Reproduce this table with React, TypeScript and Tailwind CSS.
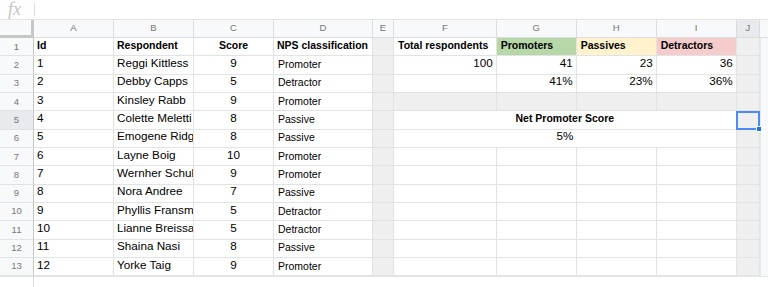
import React from "react";

const COLS = ["A", "B", "C", "D", "E", "F", "G", "H", "I", "J"];

const people: [number, string, number, string][] = [
  [1, "Reggi Kittless", 9, "Promoter"],
  [2, "Debby Capps", 5, "Detractor"],
  [3, "Kinsley Rabb", 9, "Promoter"],
  [4, "Colette Meletti", 8, "Passive"],
  [5, "Emogene Ridgeway", 8, "Passive"],
  [6, "Layne Boig", 10, "Promoter"],
  [7, "Wernher Schulke", 9, "Promoter"],
  [8, "Nora Andree", 7, "Passive"],
  [9, "Phyllis Fransman", 5, "Detractor"],
  [10, "Lianne Breissan", 5, "Detractor"],
  [11, "Shaina Nasi", 8, "Passive"],
  [12, "Yorke Taig", 9, "Promoter"],
];

const cell =
  "border-r border-b border-[#e2e3e3] overflow-hidden whitespace-nowrap h-[18.33px] text-black";
const grayCell = "border-r border-b border-[#e2e3e3] bg-[#efefef] h-[18.33px]";
const bold = "font-bold text-[10.5px] flex items-end pb-[2px]";
const plain = "text-[11.7px] flex items-end pb-[2px] text-[#222]";

function RowHead({ n, active }: { n: number; active?: boolean }) {
  return (
    <div
      className={`h-[18.33px] border-r border-b border-r-[#c4c7c5] border-b-[#e2e3e3] flex items-center justify-center text-[9.5px] text-[#777] ${
        active ? "bg-[#e8eaed]" : "bg-[#f8f9fa]"
      }`}
    >
      {n}
    </div>
  );
}

function Scroll() {
  return <div className="h-[18.33px] bg-[#f8f9fa] border-l border-[#e8e8e8]" />;
}

function RightBlock({ r }: { r: number }) {
  // columns F..I for sheet row r
  if (r === 1) {
    return (
      <>
        <div className={`${cell} ${bold} pl-[4px]`}>Total respondents</div>
        <div className={`${cell} bg-[#b6d7a8] ${bold} pl-[4px]`}>Promoters</div>
        <div className={`${cell} bg-[#fff2cc] ${bold} pl-[4px]`}>Passives</div>
        <div className={`${cell} bg-[#f4cccc] ${bold} pl-[4px]`}>Detractors</div>
      </>
    );
  }
  if (r === 2 || r === 3) {
    const vals = r === 2 ? ["100", "41", "23", "36"] : ["", "41%", "23%", "36%"];
    return (
      <>
        {vals.map((v, i) => (
          <div key={i} className={`${cell} ${plain} justify-end pr-[3px]`}>
            {v}
          </div>
        ))}
      </>
    );
  }
  if (r === 4) {
    return (
      <>
        <div className={grayCell} />
        <div className={grayCell} />
        <div className={grayCell} />
        <div className={grayCell} />
      </>
    );
  }
  if (r === 5) {
    return <div className={`${cell} col-span-4 ${bold} justify-center`}>Net Promoter Score</div>;
  }
  if (r === 6) {
    return <div className={`${cell} col-span-4 ${plain} justify-center`}>5%</div>;
  }
  return (
    <>
      <div className={cell} />
      <div className={cell} />
      <div className={cell} />
      <div className={cell} />
    </>
  );
}

export default function App() {
  return (
    <div
      className="w-[768px] h-[287px] bg-white overflow-hidden relative"
      style={{ fontFamily: '"Liberation Sans", Arial, sans-serif' }}
    >
      {/* formula bar */}
      <div className="h-[20px] flex items-center border-b border-[#e2e3e3]">
        <div className="w-[34px] flex items-center pl-[8px]">
          <span
            className="italic text-[#c4c4c4] text-[18px] leading-none -mt-[2px]"
            style={{ fontFamily: '"Liberation Serif", serif' }}
          >
            fx
          </span>
        </div>
        <div className="w-px h-[13px] bg-[#dadce0]" />
      </div>

      {/* sheet grid */}
      <div className="grid grid-cols-[34px_80px_80px_80px_99px_21px_102.7px_80px_80px_80px_23.3px_8px]">
        {/* column headers */}
        <div className="h-[18px] bg-[#f8f9fa] border-r-[3px] border-b-[3px] border-[#c4c7c5]" />
        {COLS.map((c) => (
          <div
            key={c}
            className={`h-[18px] border-r border-b border-[#dadce0] flex items-center justify-center text-[9.5px] text-[#777] ${
              c === "J" ? "bg-[#e8eaed]" : "bg-[#f8f9fa]"
            }`}
          >
            {c}
          </div>
        ))}
        <div className="h-[18px] bg-[#f8f9fa] border-b border-[#dadce0]" />

        {/* rows 1..13 */}
        <RowHead n={1} />
        <div className={`${cell} ${bold} pl-[3px]`}>Id</div>
        <div className={`${cell} ${bold} pl-[3px]`}>Respondent</div>
        <div className={`${cell} ${bold} justify-center`}>Score</div>
        <div className={`${cell} ${bold} pl-[3px]`}>NPS classification</div>
        <div className={grayCell} />
        <RightBlock r={1} />
        <div className={grayCell} />
        <Scroll />

        {people.map(([id, name, score, cls], i) => {
          const r = i + 2;
          return (
            <React.Fragment key={r}>
              <RowHead n={r} active={r === 5} />
              <div className={`${cell} ${plain} pl-[3px]`}>{id}</div>
              <div className={`${cell} ${plain} pl-[3px]`}>{name}</div>
              <div className={`${cell} ${plain} justify-center`}>{score}</div>
              <div className={`${cell} text-[10.5px] flex items-end pb-[1px] pl-[4px] text-[#222]`}>{cls}</div>
              <div className={grayCell} />
              <RightBlock r={r} />
              <div className={grayCell} />
              <Scroll />
            </React.Fragment>
          );
        })}
      </div>

      {/* footer strip */}
      <div className="flex h-[11px] border-t border-[#e2e3e3]">
        <div className="w-[34px] border-r border-[#dadce0]" />
        <div className="flex-1 bg-white" />
      </div>

      {/* J5 selection */}
      <div className="absolute left-[736px] top-[111px] w-[24px] h-[19px] border-2 border-[#4c8bf5] pointer-events-none">
        <div className="absolute right-[-4px] bottom-[-4px] w-[6px] h-[6px] bg-[#1a73e8] border border-white" />
      </div>
    </div>
  );
}
